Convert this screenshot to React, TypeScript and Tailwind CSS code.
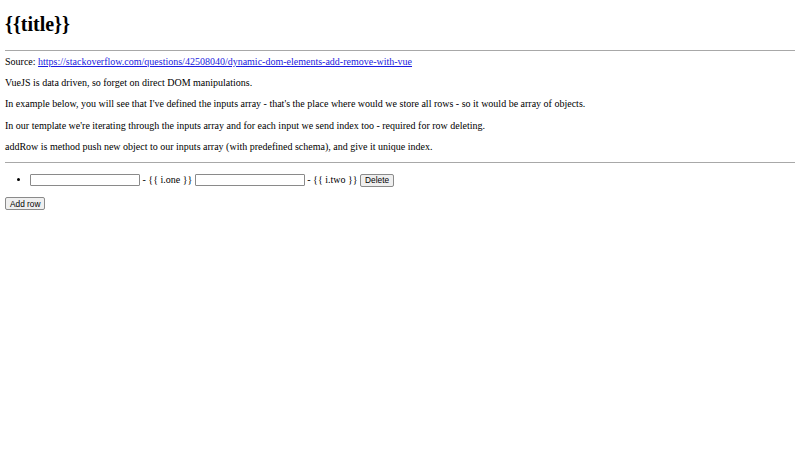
import React from "react";

export default function App() {
  return (
    <div className="min-h-[450px] bg-white px-[5px] pt-px text-[10px] text-black font-['Liberation_Serif','Times_New_Roman',serif]">
      <h1 className="mt-[12.4px] mb-[13.4px] text-[20px] font-bold leading-[23px]">{"{{title}}"}</h1>
      <hr className="my-[5px] h-0 border-0 border-t border-[#a8a8a8]" />
      <div className="leading-[11.5px]">
        Source:{" "}
        <a className="text-[#1a1ae0] underline" href="#">
          https://stackoverflow.com/questions/42508040/dynamic-dom-elements-add-remove-with-vue
        </a>
      </div>
      <p className="my-[9.75px] leading-[11.5px]">VueJS is data driven, so forget on direct DOM manipulations.</p>
      <p className="my-[9.75px] leading-[11.5px]">
        In example below, you will see that I've defined the inputs array - that's the place where would we store all rows - so it would be array of objects.
      </p>
      <p className="my-[9.75px] leading-[11.5px]">
        In our template we're iterating through the inputs array and for each input we send index too - required for row deleting.
      </p>
      <p className="my-[9.75px] leading-[11.5px]">
        addRow is method push new object to our inputs array (with predefined schema), and give it unique index.
      </p>
      <hr className="my-[5px] h-0 border-0 border-t border-[#a8a8a8]" />
      <ul className="mt-[9.5px] mb-[9px] list-disc pl-[25px]">
        <li className="leading-[14px]">
          <input type="text" className="h-[12px] w-[110px] rounded-[1px] border border-[#8a8a8a] bg-white align-middle outline-none" />
          {" - {{ i.one }} "}
          <input type="text" className="h-[12px] w-[110px] rounded-[1px] border border-[#8a8a8a] bg-white align-middle outline-none" />
          {" - {{ i.two }} "}
          <button className="h-[13px] rounded-[2px] border border-[#8a8a8a] bg-[#efefef] px-[4px] align-middle font-['Liberation_Sans',Arial,sans-serif] text-[8.3px] leading-[10px]">
            Delete
          </button>
        </li>
      </ul>
      <button className="h-[12.5px] rounded-[2px] border border-[#8a8a8a] bg-[#efefef] px-[4px] font-['Liberation_Sans',Arial,sans-serif] text-[8.3px] leading-[10px]">
        Add row
      </button>
    </div>
  );
}
